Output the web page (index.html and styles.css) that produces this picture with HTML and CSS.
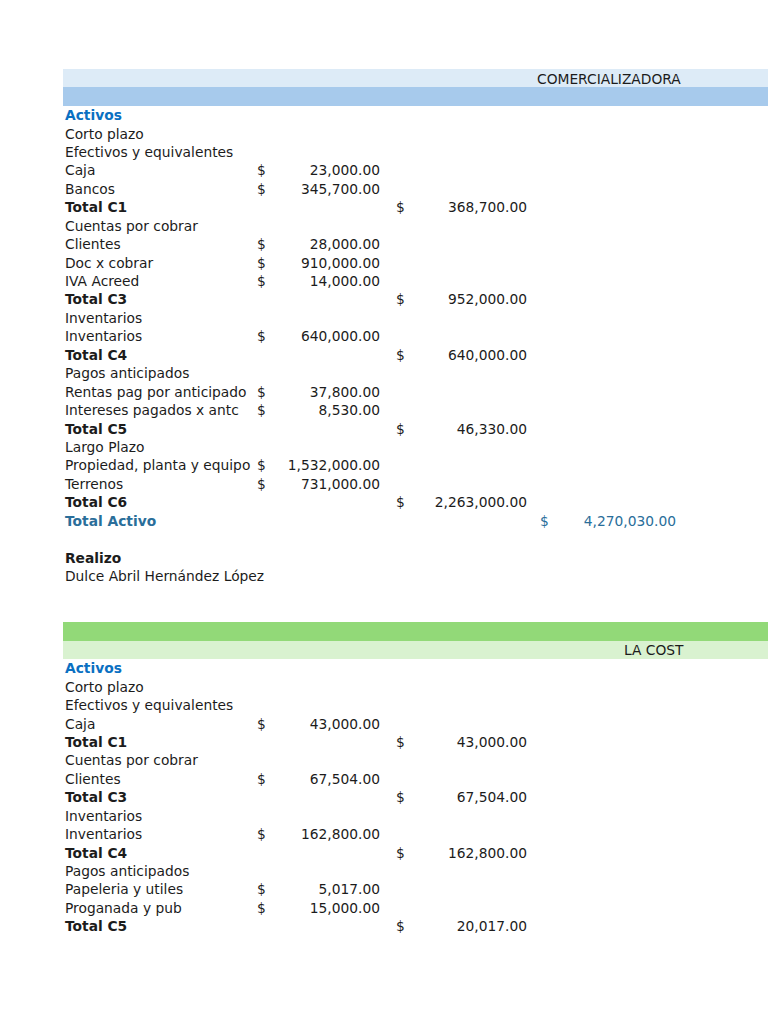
FILE: index.html
```html
<!DOCTYPE html>
<html lang="es">
<head>
<meta charset="utf-8">
<title>Balance</title>
<link rel="stylesheet" href="styles.css">
</head>
<body>
<div class="sheet">
  <div class="band band-light-blue"><span class="title t1">COMERCIALIZADORA</span></div>
  <div class="band band-blue"></div>

  <div class="row"><span class="lbl sec">Activos</span></div>
  <div class="row"><span class="lbl">Corto plazo</span></div>
  <div class="row"><span class="lbl">Efectivos y equivalentes</span></div>
  <div class="row"><span class="lbl">Caja</span><span class="m b"><i>$</i><i>23,000.00</i></span></div>
  <div class="row"><span class="lbl">Bancos</span><span class="m b"><i>$</i><i>345,700.00</i></span></div>
  <div class="row bold"><span class="lbl">Total C1</span><span class="m b"></span><span class="m c"><i>$</i><i>368,700.00</i></span></div>
  <div class="row"><span class="lbl">Cuentas por cobrar</span></div>
  <div class="row"><span class="lbl">Clientes</span><span class="m b"><i>$</i><i>28,000.00</i></span></div>
  <div class="row"><span class="lbl">Doc x cobrar</span><span class="m b"><i>$</i><i>910,000.00</i></span></div>
  <div class="row"><span class="lbl">IVA Acreed</span><span class="m b"><i>$</i><i>14,000.00</i></span></div>
  <div class="row bold"><span class="lbl">Total C3</span><span class="m b"></span><span class="m c"><i>$</i><i>952,000.00</i></span></div>
  <div class="row"><span class="lbl">Inventarios</span></div>
  <div class="row"><span class="lbl">Inventarios</span><span class="m b"><i>$</i><i>640,000.00</i></span></div>
  <div class="row bold"><span class="lbl">Total C4</span><span class="m b"></span><span class="m c"><i>$</i><i>640,000.00</i></span></div>
  <div class="row"><span class="lbl">Pagos anticipados</span></div>
  <div class="row"><span class="lbl">Rentas pag por anticipado</span><span class="m b"><i>$</i><i>37,800.00</i></span></div>
  <div class="row"><span class="lbl">Intereses pagados x antc</span><span class="m b"><i>$</i><i>8,530.00</i></span></div>
  <div class="row bold"><span class="lbl">Total C5</span><span class="m b"></span><span class="m c"><i>$</i><i>46,330.00</i></span></div>
  <div class="row"><span class="lbl">Largo Plazo</span></div>
  <div class="row"><span class="lbl">Propiedad, planta y equipo</span><span class="m b"><i>$</i><i>1,532,000.00</i></span></div>
  <div class="row"><span class="lbl">Terrenos</span><span class="m b"><i>$</i><i>731,000.00</i></span></div>
  <div class="row bold"><span class="lbl">Total C6</span><span class="m b"></span><span class="m c"><i>$</i><i>2,263,000.00</i></span></div>
  <div class="row total"><span class="lbl">Total Activo</span><span class="m b"></span><span class="m c"></span><span class="m d"><i>$</i><i>4,270,030.00</i></span></div>
  <div class="row"></div>
  <div class="row bold"><span class="lbl">Realizo</span></div>
  <div class="row"><span class="lbl wide">Dulce Abril Hernández López</span></div>
  <div class="row"></div>
  <div class="row"></div>

  <div class="band band-green"></div>
  <div class="band band-light-green"><span class="title t2">LA COST</span></div>

  <div class="row"><span class="lbl sec">Activos</span></div>
  <div class="row"><span class="lbl">Corto plazo</span></div>
  <div class="row"><span class="lbl">Efectivos y equivalentes</span></div>
  <div class="row"><span class="lbl">Caja</span><span class="m b"><i>$</i><i>43,000.00</i></span></div>
  <div class="row bold"><span class="lbl">Total C1</span><span class="m b"></span><span class="m c"><i>$</i><i>43,000.00</i></span></div>
  <div class="row"><span class="lbl">Cuentas por cobrar</span></div>
  <div class="row"><span class="lbl">Clientes</span><span class="m b"><i>$</i><i>67,504.00</i></span></div>
  <div class="row bold"><span class="lbl">Total C3</span><span class="m b"></span><span class="m c"><i>$</i><i>67,504.00</i></span></div>
  <div class="row"><span class="lbl">Inventarios</span></div>
  <div class="row"><span class="lbl">Inventarios</span><span class="m b"><i>$</i><i>162,800.00</i></span></div>
  <div class="row bold"><span class="lbl">Total C4</span><span class="m b"></span><span class="m c"><i>$</i><i>162,800.00</i></span></div>
  <div class="row"><span class="lbl">Pagos anticipados</span></div>
  <div class="row"><span class="lbl">Papeleria y utiles</span><span class="m b"><i>$</i><i>5,017.00</i></span></div>
  <div class="row"><span class="lbl">Proganada y pub</span><span class="m b"><i>$</i><i>15,000.00</i></span></div>
  <div class="row bold"><span class="lbl">Total C5</span><span class="m b"></span><span class="m c"><i>$</i><i>20,017.00</i></span></div>
</div>
</body>
</html>
```

FILE: styles.css
```css
html, body {
  margin: 0;
  padding: 0;
  background: #ffffff;
}

.sheet {
  padding: 69px 0 0 63px;
  width: 705px;
  font-family: "DejaVu Sans", "Liberation Sans", sans-serif;
  font-size: 13.8px;
  color: #1c1c1c;
}

.band {
  height: 18.45px;
  display: flex;
  align-items: center;
}

.band-light-blue { background: #ddebf7; }
.band-blue { background: #a7caec; }
.band-green { background: #92d978; }
.band-light-green { background: #d9f2d0; }

.title {
  white-space: nowrap;
  padding-top: 1px;
}
.t1 { padding-left: 474px; }
.t2 { padding-left: 561px; }

.row {
  height: 18.45px;
  display: flex;
  align-items: center;
  white-space: nowrap;
  line-height: 17px;
  padding-top: 1px;
  box-sizing: border-box;
}

.lbl {
  width: 187px;
  padding-left: 2px;
  flex: none;
}

.wide { width: auto; }

.sec {
  color: #0a70c2;
  font-weight: bold;
}

.bold { font-weight: bold; }
.bold .m { font-weight: normal; }

.total .lbl { color: #2a6e9a; font-weight: bold; }
.total .m { color: #2a6e9a; }

.m {
  display: flex;
  justify-content: space-between;
  flex: none;
}
.m i { font-style: normal; }

.b { width: 123px; padding: 0 5px 0 5px; }
.c { width: 131px; padding: 0 5px 0 11px; }
.d { width: 136px; padding: 0 5px 0 8px; }
```
